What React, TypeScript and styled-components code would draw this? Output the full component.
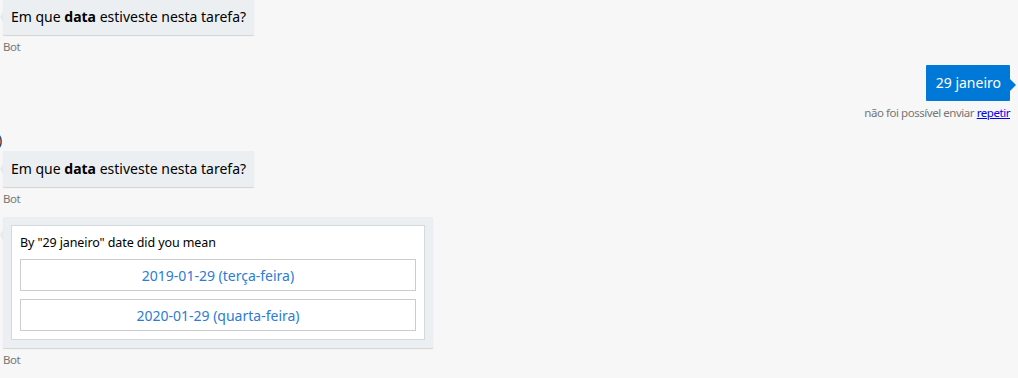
import styled, { createGlobalStyle } from "styled-components";

const GlobalStyle = createGlobalStyle`
    html, body {
        margin: 0;
        padding: 0;
        background: #f7f7f7;
        font-family: "Noto Sans", "Open Sans", sans-serif;
        overflow: hidden;
    }
`;

const Transcript = styled.ul`
    list-style: none;
    margin: -1px 0 0 0;
    padding: 0 8px 0 3px;
    display: flex;
    flex-direction: column;
    gap: 10px;
    width: 1018px;
    box-sizing: border-box;
`;

const Activity = styled.li<{ $fromUser?: boolean }>`
    display: flex;
    flex-direction: column;
    align-items: ${(p) => (p.$fromUser ? "flex-end" : "flex-start")};
`;

const Bubble = styled.div<{ $fromUser?: boolean }>`
    position: relative;
    background: ${(p) => (p.$fromUser ? "#0078d7" : "#eceff1")};
    color: ${(p) => (p.$fromUser ? "#ffffff" : "#000000")};
    font-size: 14px;
    line-height: 20px;
    padding: ${(p) => (p.$fromUser ? "8px 9px 8px 10px" : "8px")};
    border-radius: 1px;
    box-shadow: ${(p) => (p.$fromUser ? "none" : "0 1px 1px rgba(0, 0, 0, 0.15)")};

    &::before {
        content: "";
        position: absolute;
        top: 14px;
        ${(p) => (p.$fromUser ? "right: -6px;" : "left: -3px;")}
        border-top: 6px solid transparent;
        border-bottom: 6px solid transparent;
        ${(p) =>
            p.$fromUser
                ? "border-left: 6px solid #0078d7;"
                : "border-right: 3px solid #e6e9eb; top: 13px; border-top-width: 5px; border-bottom-width: 5px;"}
    }

    b {
        font-weight: 700;
    }
`;

const Meta = styled.div`
    margin-top: 4px;
    font-size: 11.5px;
    letter-spacing: -0.45px;
    line-height: 16px;
    color: #767676;
`;

const RetryLink = styled.a`
    color: #0000ee;
    text-decoration: underline;
    cursor: pointer;
`;

const Clipped = styled.div`
    margin: 1px 0 3px -5px;
    font-size: 14px;
    line-height: 16px;
    color: #1a2a3a;
`;

const Card = styled.div`
    position: relative;
    background: #eceff1;
    padding: 8px;
    width: 414px;
    border-radius: 1px;
    box-shadow: 0 1px 1px rgba(0, 0, 0, 0.15);

    &::before {
        content: "";
        position: absolute;
        left: -3px;
        top: 13px;
        border-top: 5px solid transparent;
        border-bottom: 5px solid transparent;
        border-right: 3px solid #e6e9eb;
    }
`;

const CardBody = styled.div`
    background: #ffffff;
    border: 1px solid #d3dade;
    padding: 8px;
    display: flex;
    flex-direction: column;
    gap: 8px;
`;

const CardTitle = styled.div`
    font-size: 12.5px;
    letter-spacing: -0.1px;
    line-height: 18px;
    color: #000000;
    margin-bottom: -1px;
`;

const Choice = styled.button`
    height: 32px;
    border: 1px solid #cccccc;
    background: #ffffff;
    color: #2b7cd3;
    font-family: inherit;
    font-size: 14px;
    padding: 0;
    cursor: pointer;
`;

export default function App() {
    return (
        <>
            <GlobalStyle />
            <Transcript>
                <Activity>
                    <Bubble>
                        Em que <b>data</b> estiveste nesta tarefa?
                    </Bubble>
                    <Meta>Bot</Meta>
                </Activity>
                <Activity $fromUser>
                    <Bubble $fromUser>29 janeiro</Bubble>
                    <Meta>
                        não foi possível enviar <RetryLink>repetir</RetryLink>
                    </Meta>
                </Activity>
                <Activity>
                    <Clipped>)</Clipped>
                    <Bubble>
                        Em que <b>data</b> estiveste nesta tarefa?
                    </Bubble>
                    <Meta>Bot</Meta>
                </Activity>
                <Activity>
                    <Card>
                        <CardBody>
                            <CardTitle>By "29 janeiro" date did you mean</CardTitle>
                            <Choice>2019-01-29 (terça-feira)</Choice>
                            <Choice>2020-01-29 (quarta-feira)</Choice>
                        </CardBody>
                    </Card>
                    <Meta>Bot</Meta>
                </Activity>
            </Transcript>
        </>
    );
}
